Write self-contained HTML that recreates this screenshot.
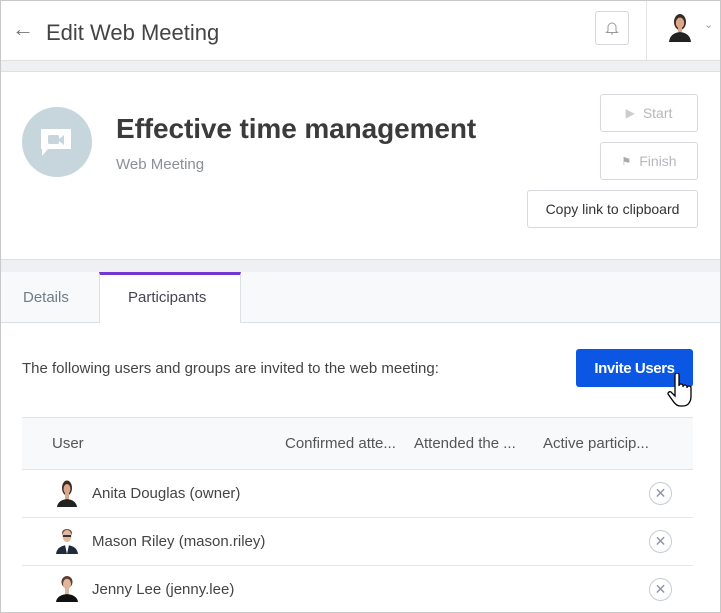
<!DOCTYPE html>
<html><head><meta charset="utf-8"><style>
*{box-sizing:border-box;margin:0;padding:0}
body{width:721px;height:613px;overflow:hidden;background:#fff;font-family:"Liberation Sans",sans-serif;color:#333;position:relative}
.frame{position:absolute;left:0;top:0;width:721px;height:613px;border:1px solid #c8c8c8;pointer-events:none;z-index:10}
.abs{position:absolute}
.btn{position:absolute;border:1px solid #d6d9dd;border-radius:3px;background:#fff;display:flex;align-items:center;justify-content:center;font-size:14px}
.av{position:absolute;width:26px;height:28px}
.x{position:absolute;left:649px;width:23px;height:23px;border:1px solid #c5ccd6;border-radius:50%;color:#8a94a3;font-size:14px;display:flex;align-items:center;justify-content:center}
.row{position:absolute;left:22px;width:671px;height:48px;border-bottom:1px solid #e3e6ea}
.name{position:absolute;left:92px;font-size:15px;color:#444}
</style></head><body>
<div class="frame"></div>
<div class="abs" style="left:12px;top:16px;font-size:22px;color:#777">←</div>
<div class="abs" style="left:46px;top:20px;font-size:22px;color:#444">Edit Web Meeting</div>
<div class="btn" style="left:595px;top:11px;width:34px;height:34px">
<svg width="14" height="16" viewBox="0 0 14 16"><path d="M3 11V7a4 4 0 0 1 8 0v4l1.5 1.5h-11z M6 14h2" fill="none" stroke="#999" stroke-width="1"/></svg></div>
<div class="abs" style="left:646px;top:0;width:1px;height:60px;background:#e3e3e3"></div>
<svg class="abs" style="left:667px;top:12px" width="26" height="30" viewBox="0 0 26 30"><ellipse cx="13" cy="10" rx="6" ry="8" fill="#3a2a22"/><ellipse cx="13" cy="11" rx="4.2" ry="5.5" fill="#d9a78a"/><rect x="11" y="15" width="4" height="5" fill="#d9a78a"/><path d="M2 30q1-9 11-10q10 1 11 10z" fill="#222"/></svg>
<div class="abs" style="left:704px;top:18px;font-size:11px;color:#999">⌄</div>
<div class="abs" style="left:0;top:60px;width:721px;height:12px;background:#eef0f3;border-top:1px solid #e0e0e0;border-bottom:1px solid #e0e0e0"></div>
<div class="abs" style="left:22px;top:107px;width:70px;height:70px;border-radius:50%;background:#c7d6dd"></div>
<svg class="abs" style="left:40px;top:127px" width="34" height="34" viewBox="0 0 34 34"><path d="M1 2h30v20H8l-6 7v-7H1z" fill="#fff"/><rect x="8" y="8" width="11" height="9" rx="1.5" fill="#c7d6dd"/><path d="M19 12l5-4v10l-5-4z" fill="#c7d6dd"/></svg>
<div class="abs" style="left:116px;top:113px;font-size:28px;font-weight:bold;color:#3b3b3b;letter-spacing:-0.1px">Effective time management</div>
<div class="abs" style="left:116px;top:156px;font-size:15px;color:#8a9096">Web Meeting</div>
<div class="btn" style="left:600px;top:94px;width:98px;height:38px;color:#b5b8bc"><span style="font-size:12px;margin-right:8px;color:#ccc">▶</span>Start</div>
<div class="btn" style="left:600px;top:142px;width:98px;height:38px;color:#b5b8bc"><span style="font-size:11px;margin-right:8px;color:#aaa">⚑</span>Finish</div>
<div class="btn" style="left:527px;top:190px;width:171px;height:38px;color:#333;font-size:14px">Copy link to clipboard</div>
<div class="abs" style="left:0;top:259px;width:721px;height:13px;background:#eef0f3;border-top:1px solid #e0e0e0"></div>
<div class="abs" style="left:0;top:272px;width:721px;height:51px;background:#f7f9fa;border-bottom:1px solid #dcdfe3"></div>
<div class="abs" style="left:23px;top:289px;font-size:15px;color:#6e7d8c">Details</div>
<div class="abs" style="left:99px;top:272px;width:142px;height:51px;background:#fff;border-top:3px solid #7336d0;border-left:1px solid #dcdfe3;border-right:1px solid #dcdfe3"></div>
<div class="abs" style="left:128px;top:289px;font-size:15px;color:#445">Participants</div>
<div class="abs" style="left:22px;top:360px;font-size:15px;color:#444">The following users and groups are invited to the web meeting:</div>
<div class="abs" style="left:576px;top:349px;width:117px;height:38px;background:#0b57e3;border-radius:3px;color:#fff;font-size:15px;font-weight:bold;display:flex;align-items:center;justify-content:center;letter-spacing:-0.4px">Invite Users</div>
<svg class="abs" style="left:667px;top:373px" width="28" height="36" viewBox="0 0 28 36"><path d="M8 2a2 2 0 0 1 4 0v11a2 2 0 0 1 4 0v1a2 2 0 0 1 4 0v1a2 2 0 0 1 4 0v8c0 6-3 10-8 10h-3c-3 0-5-2-7-5l-5-7a2 2 0 0 1 3-2l4 4z" fill="#fff" stroke="#000" stroke-width="1.3"/></svg>
<div class="abs" style="left:22px;top:417px;width:671px;height:53px;background:#f7f9fa;border-top:1px solid #e0e3e7;border-bottom:1px solid #e0e3e7"></div>
<div class="abs" style="left:52px;top:435px;font-size:15px;color:#555">User</div>
<div class="abs" style="left:285px;top:435px;font-size:15px;color:#555">Confirmed atte...</div>
<div class="abs" style="left:414px;top:435px;font-size:15px;color:#555">Attended the ...</div>
<div class="abs" style="left:543px;top:435px;font-size:15px;color:#555">Active particip...</div>
<div class="row" style="top:470px"></div>
<div class="row" style="top:518px"></div>
<svg class="av" style="left:54px;top:479px" viewBox="0 0 26 28"><ellipse cx="13" cy="9" rx="5" ry="7.5" fill="#3a2a22"/><ellipse cx="13" cy="10" rx="3.5" ry="5" fill="#d9a78a"/><rect x="11" y="14" width="4" height="6" fill="#d9a78a"/><path d="M3 28q1-7 10-8q9 1 10 8z" fill="#222"/></svg>
<div class="name" style="top:485px">Anita Douglas (owner)</div>
<div class="x" style="top:482px">✕</div>
<svg class="av" style="left:54px;top:526px" viewBox="0 0 26 28"><ellipse cx="13" cy="7" rx="5" ry="4" fill="#6b5040"/><ellipse cx="13" cy="10" rx="4.5" ry="6" fill="#e2b9a0"/><rect x="9" y="9" width="8" height="2" fill="#333"/><path d="M2 28q1-8 11-9q10 1 11 9z" fill="#1f2a3a"/><path d="M11 19h4l-2 9z" fill="#fff"/></svg>
<div class="name" style="top:533px">Mason Riley (mason.riley)</div>
<div class="x" style="top:530px">✕</div>
<svg class="av" style="left:54px;top:574px" viewBox="0 0 26 28"><ellipse cx="13" cy="8" rx="5.5" ry="6" fill="#5a3e2e"/><ellipse cx="13" cy="10" rx="4" ry="5.3" fill="#e0b59b"/><rect x="11" y="14" width="4" height="6" fill="#e0b59b"/><path d="M2 28q1-7 11-8q10 1 11 8z" fill="#111"/></svg>
<div class="name" style="top:581px">Jenny Lee (jenny.lee)</div>
<div class="x" style="top:578px">✕</div>
</body></html>
